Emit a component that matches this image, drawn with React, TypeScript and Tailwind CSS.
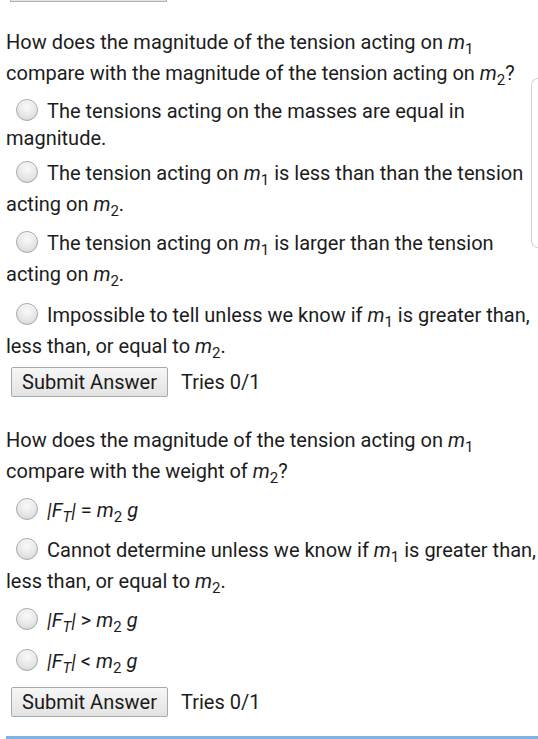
import React from "react";

function M({ sub }: { sub: string }) {
  return (
    <span className="whitespace-nowrap">
      <i>m</i>
      <span className="text-[15px] leading-[22px] align-[-5px]">{sub}</span>
    </span>
  );
}

function FT() {
  return (
    <span className="italic">
      |F<span className="text-[15px] leading-[22px] align-[-5px]">T</span>|
    </span>
  );
}

function Radio() {
  return (
    <span className="inline-block w-[22px] h-[22px] ml-[10px] mr-[9px] align-[-3px] rounded-full border border-[#a8a8a8] bg-[radial-gradient(circle_at_50%_35%,#fafafa_0%,#e6e6e6_55%,#cfcfcf_100%)] shadow-[inset_0_1px_1px_rgba(255,255,255,0.8)]" />
  );
}

function Option({ children, className = "mt-[8px]" }: { children: React.ReactNode; className?: string }) {
  return (
    <div className={className}>
      <Radio />
      {children}
    </div>
  );
}

function SubmitRow({ className = "" }: { className?: string }) {
  return (
    <div className={"flex items-center h-[30px] " + className}>
      <button className="ml-[5px] h-[30px] w-[157px] rounded-[2px] border border-[#a9a9a9] bg-linear-to-b from-[#f6f6f6] to-[#e3e3e3] text-[20px] leading-none text-[#1a1a1a]">
        Submit Answer
      </button>
      <span className="ml-[13px] text-[20px]">Tries 0/1</span>
    </div>
  );
}

export default function App() {
  return (
    <div className="relative w-[538px] h-[739px] overflow-hidden bg-white font-['Roboto',sans-serif] text-[20px] leading-[27px] text-[#1c1c1c]">
      {/* bottom edge of the previous part's button */}
      <div className="ml-[10px] w-[157px] h-[2px] border-x border-b border-[#b0b0b0] bg-[#e4e4e4]" />

      <section className="pl-[6px] mt-[27px]">
        {/* side panel edge peeking in from the right */}
        <div className="float-right mt-[49px] w-[7px] h-[170px] rounded-l-[8px] border border-r-0 border-[#d4d4d4]" />
        <p className="pr-[6px]">
          How does the magnitude of the tension acting on <M sub="1" /> compare with the magnitude of the tension
          acting on <M sub="2" />?
        </p>
        <Option className="mt-[7px]">The tensions acting on the masses are equal in magnitude.</Option>
        <Option>
          The tension acting on <M sub="1" /> is less than than the tension acting on <M sub="2" />.
        </Option>
        <Option>
          The tension acting on <M sub="1" /> is larger than the tension acting on <M sub="2" />.
        </Option>
        <Option className="mt-[10px]">
          Impossible to tell unless we know if <M sub="1" /> is greater than, less than, or equal to <M sub="2" />.
        </Option>
        <SubmitRow className="mt-[3px]" />
      </section>

      <section className="pl-[6px] mt-[30px]">
        <p className="pr-[6px]">
          How does the magnitude of the tension acting on <M sub="1" /> compare with the weight of <M sub="2" />?
        </p>
        <Option>
          <FT /> = <M sub="2" /> <i>g</i>
        </Option>
        <Option className="mt-[9px]">
          Cannot determine unless we know if <M sub="1" /> is greater than, less than, or equal to <M sub="2" />.
        </Option>
        <Option>
          <FT /> &gt; <M sub="2" /> <i>g</i>
        </Option>
        <Option className="mt-[10px]">
          <FT /> &lt; <M sub="2" /> <i>g</i>
        </Option>
        <SubmitRow className="mt-[8px]" />
      </section>

      <div className="absolute left-[6px] right-0 bottom-0 h-[3px] bg-[#7fb3e3]" />
    </div>
  );
}
